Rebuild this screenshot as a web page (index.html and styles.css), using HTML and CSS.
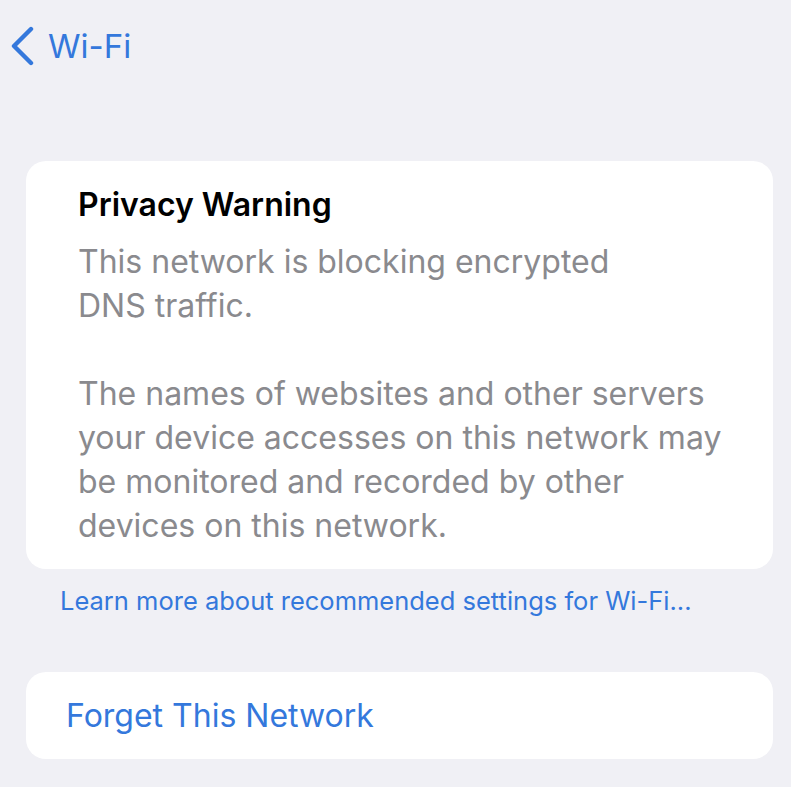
FILE: index.html
```html
<!DOCTYPE html>
<html lang="en">
<head>
  <meta charset="UTF-8">
  <meta name="viewport" content="width=device-width, initial-scale=1.0">
  <title>Wi-Fi</title>
  <link rel="stylesheet" href="styles.css">
</head>
<body>
  <div class="nav">
    <a href="#" class="back">
      <svg class="chevron" width="26" height="40" viewBox="0 0 26 40">
        <path d="M21 3 L4 20 L21 37" fill="none" stroke="#3478dc" stroke-width="4.4" stroke-linecap="round" stroke-linejoin="round"/>
      </svg>
      <span>Wi-Fi</span>
    </a>
  </div>

  <div class="card warning">
    <h3>Privacy Warning</h3>
    <p>This network is blocking encrypted<br>DNS traffic.</p>
    <p>The names of websites and other servers your device accesses on this network may be monitored and recorded by other devices on this network.</p>
  </div>

  <a href="#" class="learn">Learn more about recommended settings for Wi-Fi...</a>

  <div class="card forget">
    <a href="#">Forget This Network</a>
  </div>
</body>
</html>
```

FILE: styles.css
```css
body {
  margin: 0;
  padding: 0 18px 0 26px;
  background: #f0f0f5;
  font-family: Inter, "Noto Sans", sans-serif;
  height: 787px;
  overflow: hidden;
}
a {
  color: #3478dc;
  text-decoration: none;
}
.nav {
  height: 161px;
}
.back {
  display: flex;
  align-items: center;
  margin-left: -16px;
  padding-top: 26px;
  font-size: 33px;
}
.chevron {
  margin-right: 12px;
}
.card {
  background: #fff;
  border-radius: 20px;
}
.warning {
  padding: 22px 30px 21px 52px;
}
.warning h3 {
  margin: 0 0 13px;
  font-size: 32px;
  font-weight: 600;
  color: #000;
  line-height: 44px;
}
.warning p {
  margin: 0 0 44px;
  font-size: 32px;
  line-height: 44px;
  color: #8a8a8e;
  max-width: 660px;
}
.warning p:last-child {
  margin-bottom: 0;
}
.learn {
  display: block;
  margin: 16px 0 0 34px;
  font-size: 25.5px;
  line-height: 32px;
  height: 87px;
}
.forget {
  height: 87px;
  display: flex;
  align-items: center;
  padding-left: 40px;
}
.forget a {
  font-size: 32px;
}
```
